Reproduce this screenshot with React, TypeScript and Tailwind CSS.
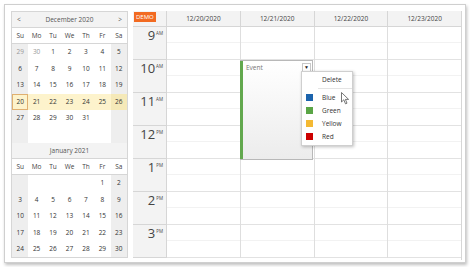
import React from 'react'

const font = { fontFamily: '"Open Sans", "Noto Sans", sans-serif' }

const dayNames = ['Su', 'Mo', 'Tu', 'We', 'Th', 'Fr', 'Sa']

type Day = { n: number; other?: boolean }

const december: Day[][] = [
  [{ n: 29, other: true }, { n: 30, other: true }, { n: 1 }, { n: 2 }, { n: 3 }, { n: 4 }, { n: 5 }],
  [6, 7, 8, 9, 10, 11, 12].map((n) => ({ n })),
  [13, 14, 15, 16, 17, 18, 19].map((n) => ({ n })),
  [20, 21, 22, 23, 24, 25, 26].map((n) => ({ n })),
  [27, 28, 29, 30, 31].map((n) => ({ n })),
  [],
]

const january: Day[][] = [
  [0, 0, 0, 0, 0, 1, 2].map((n) => ({ n })),
  [3, 4, 5, 6, 7, 8, 9].map((n) => ({ n })),
  [10, 11, 12, 13, 14, 15, 16].map((n) => ({ n })),
  [17, 18, 19, 20, 21, 22, 23].map((n) => ({ n })),
  [24, 25, 26, 27, 28, 29, 30].map((n) => ({ n })),
]

function Month({ title, weeks, nav, selectedRow }: { title: string; weeks: Day[][]; nav?: boolean; selectedRow?: number }) {
  return (
    <div>
      <div className="flex h-[16px] items-center justify-between border-b border-[#d6d6d6] bg-[#f3f3f3] px-[5px] text-[6.5px] text-[#555]">
        <span className="w-[8px]">{nav ? '<' : ''}</span>
        <span>{title}</span>
        <span className="w-[8px] text-right">{nav ? '>' : ''}</span>
      </div>
      <div className="grid h-[16px] grid-cols-7 items-center border-b border-[#d6d6d6] bg-white text-[6.5px] text-[#444]">
        {dayNames.map((d) => (
          <span key={d} className="text-center">{d}</span>
        ))}
      </div>
      {weeks.map((week, r) => (
        <div key={r} className="grid h-[16.5px] grid-cols-7">
          {Array.from({ length: 7 }).map((_, c) => {
            const day = week[c]
            const weekend = c === 0 || c === 6
            const sel = r === selectedRow
            let bg = weekend ? 'bg-[#eeeeee]' : 'bg-white'
            if (sel) bg = c === 6 ? 'bg-[#f5e9b8]' : 'bg-[#fdf3cc]'
            const first = sel && c === 0
            return (
              <div
                key={c}
                className={`flex items-center justify-center text-[6.5px] ${bg} ${
                  first ? 'border border-[#e0b070] bg-[#f8e6b8]' : ''
                } ${day?.other ? 'text-[#999]' : 'text-[#333]'}`}
              >
                {day && day.n > 0 ? day.n : ''}
              </div>
            )
          })}
        </div>
      ))}
    </div>
  )
}

const hours = [
  { h: '9', s: 'AM' },
  { h: '10', s: 'AM' },
  { h: '11', s: 'AM' },
  { h: '12', s: 'PM' },
  { h: '1', s: 'PM' },
  { h: '2', s: 'PM' },
  { h: '3', s: 'PM' },
]

const dates = ['12/20/2020', '12/21/2020', '12/22/2020', '12/23/2020']

const menuColors = [
  { name: 'Blue', color: 'bg-[#1c64ad]' },
  { name: 'Green', color: 'bg-[#5aa546]' },
  { name: 'Yellow', color: 'bg-[#f4b933]' },
  { name: 'Red', color: 'bg-[#cc0000]' },
]

function Calendar() {
  return (
    <div className="relative w-[329px] border-r border-[#d6d6d6]">
      <div className="flex h-[16px] border-b border-[#d6d6d6] bg-[#f3f3f3]">
        <div className="flex w-[34px] items-start border-r border-[#d6d6d6] pl-[1px] pt-[1px]">
          <span className="bg-[#f26a21] px-[2px] text-[6px] leading-[10px] text-white">DEMO</span>
        </div>
        {dates.map((d) => (
          <div key={d} className="flex flex-1 items-center justify-center border-r border-[#d6d6d6] text-[6.5px] text-[#444] last:border-r-0">
            {d}
          </div>
        ))}
      </div>
      <div className="flex">
        <div className="w-[34px] bg-[#f3f3f3]">
          {hours.map((t) => (
            <div key={t.h} className="flex h-[33px] justify-end border-b border-r border-[#d6d6d6] pr-[3px] pt-[1px] text-[#444]">
              <span className="text-[13px] leading-[15px]">{t.h}</span>
              <span className="pl-[1px] pt-[2px] text-[4.5px] leading-[6px]">{t.s}</span>
            </div>
          ))}
        </div>
        {dates.map((d) => (
          <div key={d} className="flex-1 border-r border-[#dedede] last:border-r-0">
            {hours.map((t) => (
              <div key={t.h} className="h-[33px] border-b border-[#e2e2e2]">
                <div className="h-[16px] border-b border-[#f2f2f2]" />
              </div>
            ))}
          </div>
        ))}
      </div>

      <div className="absolute left-[107px] top-[49px] h-[100px] w-[73px] border border-l-0 border-[#b8b8b8] bg-gradient-to-b from-white to-[#ececec]">
        <div className="absolute bottom-0 left-0 top-0 w-[3px] bg-[#62a84e]" />
        <span className="absolute left-[6px] top-[2px] text-[6.5px] text-[#777]">Event</span>
        <div className="absolute right-[1px] top-[2px] flex h-[9px] w-[9px] items-center justify-center border border-[#c8c8c8] bg-white text-[5px] text-[#222]">
          ▼
        </div>
      </div>

      <div className="absolute left-[168px] top-[60px] w-[52px] border border-[#cfcfcf] bg-white py-[2px] shadow-[1px_1px_3px_rgba(0,0,0,0.25)]">
        <div className="flex h-[12px] items-center pl-[20px] text-[6.5px] text-[#333]">Delete</div>
        <div className="my-[2px] ml-[16px] border-t border-[#e4e4e4]" />
        {menuColors.map((m) => (
          <div key={m.name} className="flex h-[13px] items-center text-[6.5px] text-[#333]">
            <span className={`ml-[4px] h-[7px] w-[7px] ${m.color}`} />
            <span className="pl-[9px]">{m.name}</span>
          </div>
        ))}
      </div>

      <svg className="absolute left-[208px] top-[81px]" width="9" height="13" viewBox="0 0 9 13">
        <path d="M0.5 0.5 L0.5 10 L2.8 7.8 L4.5 11.8 L6 11.2 L4.4 7.4 L7.6 7.4 Z" fill="white" stroke="#555" strokeWidth="0.8" />
      </svg>
    </div>
  )
}

export default function App() {
  return (
    <div className="h-[267px] w-[474px] bg-white p-[4px]" style={font}>
      <div className="flex h-[259px] w-[462px] gap-[5px] border border-[#cfcfcf] pb-[2px] pl-[6px] pt-[6px] shadow-[1px_2px_3px_rgba(0,0,0,0.25)]">
        <div className="h-[247px] w-[117px] overflow-hidden border border-[#d6d6d6]">
          <Month title="December 2020" weeks={december} nav selectedRow={3} />
          <Month title="January 2021" weeks={january} />
        </div>
        <Calendar />
      </div>
    </div>
  )
}
